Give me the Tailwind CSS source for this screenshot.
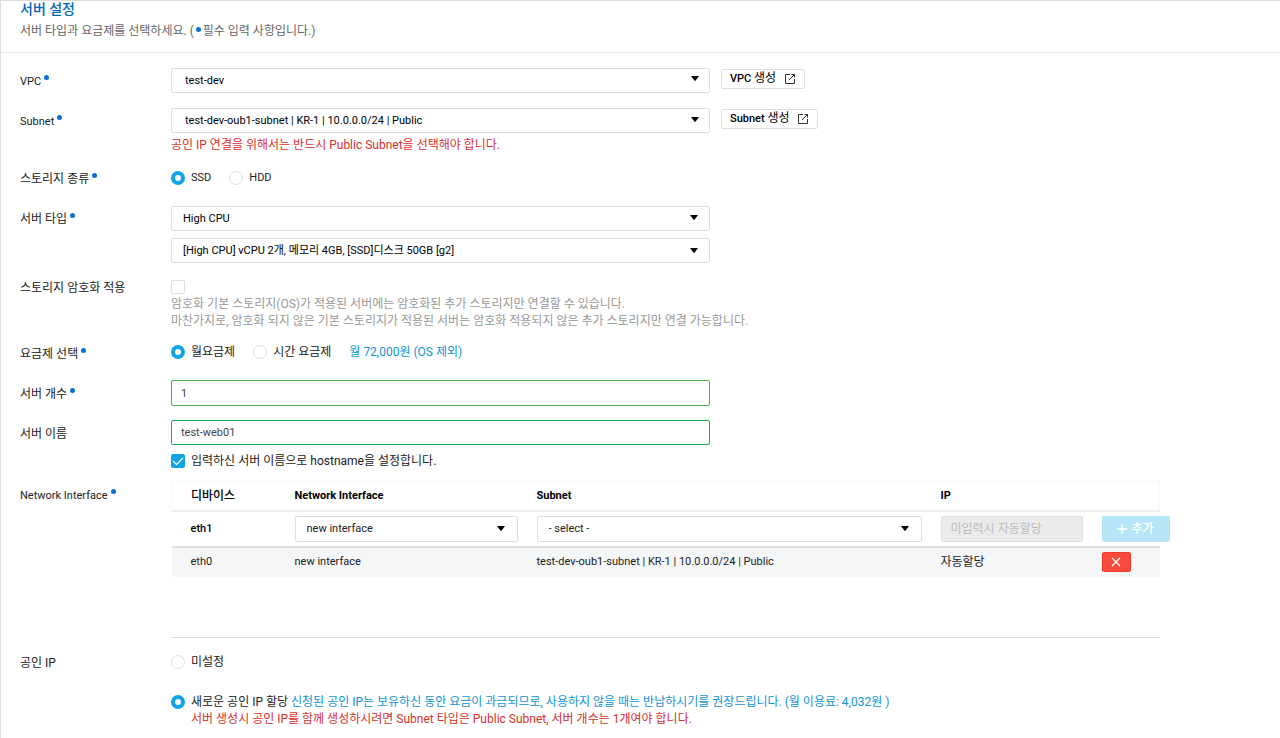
<!DOCTYPE html>
<html lang="ko">
  <head>
    <meta charset="UTF-8" />
    <meta name="viewport" content="width=device-width, initial-scale=1.0" />
    <title>서버 설정</title>
    <script src="https://cdn.jsdelivr.net/npm/@tailwindcss/browser@4"></script>
  </head>
  <body
    class="min-h-screen border-t border-l border-[#dedede] bg-white font-[Roboto,'Noto_Sans_CJK_KR',sans-serif] text-xs leading-[18px] text-[#222]"
  >
    <svg class="hidden" xmlns="http://www.w3.org/2000/svg">
      <symbol id="caret" viewBox="0 0 8 5">
        <path d="M0 0h8L4.6 4.6q-.6.6-1.2 0z" fill="#000" />
      </symbol>
      <symbol id="external" viewBox="0 0 12 12">
        <path
          d="M6 1.500H1.500v9h9V6M7.500 1.500h3v3M10.500 1.500L5 7"
          fill="none"
          stroke="#333"
          stroke-width="1"
        />
      </symbol>
    </svg>

    <header class="h-[52px] border-b border-[#e8e8e8] pl-[19px]">
      <h1 class="text-sm leading-4 font-medium text-[#0068b7]">서버 설정</h1>
      <p class="mt-[5px] flex items-center text-[#666]">
        서버 타입과 요금제를 선택하세요. (<span
          class="mr-0.5 mb-1 ml-0.5 size-[5px] rounded-full bg-[#0a6fd0]"
        ></span
        >필수 입력 사항입니다.)
      </p>
    </header>

    <form class="pt-[15px] pr-[120px] pb-2 pl-[19px]">
      <div class="mb-3.5 flex h-[26px]">
        <label for="vpc" class="flex h-[26px] w-[151px] shrink-0 text-[11px] leading-7"
          >VPC<span class="mt-[7px] ml-[3px] size-[5px] rounded-full bg-[#0a6fd0]"></span
        ></label>
        <div class="relative w-[539px]">
          <select
            id="vpc"
            class="block h-[25px] w-full appearance-none rounded-xs border border-[#dfdfdf] bg-white pl-[13px] text-[11px] text-black"
          >
            <option>test-dev</option>
          </select>
          <svg class="pointer-events-none absolute top-2 right-[11px] h-[5px] w-2"><use href="#caret" /></svg>
        </div>
        <button
          type="button"
          class="mt-px ml-[11px] flex h-5 items-center gap-2 rounded-xs border border-[#dfdfdf] px-2 text-[11px] font-medium text-black"
        >
          <span>VPC <span class="text-xs font-normal">생성</span></span>
          <svg class="size-3"><use href="#external" /></svg>
        </button>
      </div>

      <div class="mb-3.5 flex">
        <label for="subnet" class="flex h-[26px] w-[151px] shrink-0 text-[11px] leading-7"
          >Subnet<span class="mt-[7px] ml-[3px] size-[5px] rounded-full bg-[#0a6fd0]"></span
        ></label>
        <div class="w-[539px]">
          <div class="relative">
            <select
              id="subnet"
              class="block h-[25px] w-full appearance-none rounded-xs border border-[#dfdfdf] bg-white pl-[13px] text-[11px] text-black"
            >
              <option>test-dev-oub1-subnet | KR-1 | 10.0.0.0/24 | Public</option>
            </select>
            <svg class="pointer-events-none absolute top-[9px] right-[11px] h-[5px] w-2"><use href="#caret" /></svg>
          </div>
          <p class="mt-[3px] text-[#d9302c]">
            공인 IP 연결을 위해서는 반드시 Public Subnet을 선택해야 합니다.
          </p>
        </div>
        <button
          type="button"
          class="mt-px ml-[11px] flex h-5 items-center gap-2 self-start rounded-xs border border-[#dfdfdf] px-2 text-[11px] font-medium text-black"
        >
          <span>Subnet <span class="text-xs font-normal">생성</span></span>
          <svg class="size-3"><use href="#external" /></svg>
        </button>
      </div>

      <div class="mb-4.5 flex h-5 leading-5" role="radiogroup" aria-labelledby="storage-label">
        <span id="storage-label" class="flex w-[151px] shrink-0 leading-[22px]"
          >스토리지 종류<span class="mt-[5px] ml-[3px] size-[5px] rounded-full bg-[#0a6fd0]"></span
        ></span>
        <label class="mr-4.5 flex items-center gap-1.5 text-[11px]">
          <input
            type="radio"
            name="storage"
            checked
            class="size-3.5 appearance-none rounded-full border border-[#dfdfdf] checked:border-4 checked:border-[#12a5e5]"
          />
          SSD
        </label>
        <label class="flex items-center gap-1.5 text-[11px]">
          <input
            type="radio"
            name="storage"
            class="size-3.5 appearance-none rounded-full border border-[#dfdfdf] checked:border-4 checked:border-[#12a5e5]"
          />
          HDD
        </label>
      </div>

      <div class="mb-4 flex">
        <label for="server-type" class="flex h-[26px] w-[151px] shrink-0 leading-[26px]"
          >서버 타입<span class="mt-[7px] ml-[3px] size-[5px] rounded-full bg-[#0a6fd0]"></span
        ></label>
        <div class="w-[539px] space-y-[7px]">
          <div class="relative">
            <select
              id="server-type"
              class="block h-[25px] w-full appearance-none rounded-xs border border-[#dfdfdf] bg-white pl-[11px] text-[11px] text-black"
            >
              <option>High CPU</option>
            </select>
            <svg class="pointer-events-none absolute top-[9px] right-3 h-[5px] w-2"><use href="#caret" /></svg>
          </div>
          <div class="relative">
            <select
              aria-label="서버 사양"
              class="block h-[25px] w-full appearance-none rounded-xs border border-[#dfdfdf] bg-white pl-[11px] text-[11px] text-black"
            >
              <option>[High CPU] vCPU 2개, 메모리 4GB, [SSD]디스크 50GB [g2]</option>
            </select>
            <svg class="pointer-events-none absolute top-[10px] right-3 h-[5px] w-2"><use href="#caret" /></svg>
          </div>
        </div>
      </div>

      <div class="mb-3 flex">
        <label for="encrypt" class="w-[151px] shrink-0">스토리지 암호화 적용</label>
        <div>
          <input
            id="encrypt"
            type="checkbox"
            class="mt-px mb-0.5 block size-3.5 appearance-none rounded-xs border border-[#dfdfdf] checked:bg-[#12a5e5]"
          />
          <p class="leading-[17px] text-[#999]">
            암호화 기본 스토리지(OS)가 적용된 서버에는 암호화된 추가 스토리지만 연결할 수 있습니다.<br />
            마찬가지로, 암호화 되지 않은 기본 스토리지가 적용된 서버는 암호화 적용되지 않은 추가 스토리지만 연결 가능합니다.
          </p>
        </div>
      </div>

      <div class="mb-4.5 flex h-5 leading-5" role="radiogroup" aria-labelledby="plan-label">
        <span id="plan-label" class="flex w-[151px] shrink-0 leading-6"
          >요금제 선택<span class="mt-1.5 ml-[3px] size-[5px] rounded-full bg-[#0a6fd0]"></span
        ></span>
        <label class="mr-4.5 flex items-center gap-1.5">
          <input
            type="radio"
            name="plan"
            checked
            class="size-3.5 appearance-none rounded-full border border-[#dfdfdf] checked:border-4 checked:border-[#12a5e5]"
          />
          월요금제
        </label>
        <label class="mr-4.5 flex items-center gap-1.5">
          <input
            type="radio"
            name="plan"
            class="size-3.5 appearance-none rounded-full border border-[#dfdfdf] checked:border-4 checked:border-[#12a5e5]"
          />
          시간 요금제
        </label>
        <span class="text-[#0f95d8]">월 72,000원 (OS 제외)</span>
      </div>

      <div class="mb-3.5 flex h-[26px]">
        <label for="count" class="flex h-[26px] w-[151px] shrink-0 leading-7"
          >서버 개수<span class="mt-2 ml-[3px] size-[5px] rounded-full bg-[#0a6fd0]"></span
        ></label>
        <input
          id="count"
          type="text"
          value="1"
          class="h-[26px] w-[539px] rounded-xs border border-[#4caf50] px-[9px] text-[11px] text-[#444]"
        />
      </div>

      <div class="mb-2.5 flex">
        <label for="name" class="h-[26px] w-[151px] shrink-0 leading-7">서버 이름</label>
        <div class="w-[539px]">
          <input
            id="name"
            type="text"
            value="test-web01"
            class="block h-[25px] w-full rounded-xs border border-[#0fae4b] px-[9px] text-[11px] text-[#444]"
          />
          <label class="mt-1.5 flex items-center gap-1.5 leading-5">
            <span class="relative size-3.5">
              <input
                type="checkbox"
                checked
                class="block size-3.5 appearance-none rounded-xs border border-[#dfdfdf] checked:border-[#12a5e5] checked:bg-[#12a5e5]"
              />
              <svg class="pointer-events-none absolute inset-0 size-3.5" viewBox="0 0 14 14">
                <path d="M2 7l3.500 3.500L12 4" fill="none" stroke="#fff" stroke-width="1.2" />
              </svg>
            </span>
            입력하신 서버 이름으로 hostname을 설정합니다.
          </label>
        </div>
      </div>

      <div class="mb-3.5 flex">
        <span class="flex w-[151px] shrink-0 text-[11px] leading-[30px]"
          >Network Interface<span class="mt-2 ml-[3px] size-[5px] rounded-full bg-[#0a6fd0]"></span
        ></span>
        <div class="grow border-b border-[#dfdfdf] pb-[60px]">
          <table class="w-full table-fixed text-left text-[11px]">
            <thead class="border border-b-2 border-[#f8f8f8] border-b-[#eee] text-black">
              <tr class="h-[29px]">
                <th class="w-[123px] pl-[19px] text-xs font-medium">디바이스</th>
                <th class="w-[242px] font-bold">Network Interface</th>
                <th class="font-bold">Subnet</th>
                <th class="w-[161px] font-bold">IP</th>
                <th class="w-[58px]"></th>
              </tr>
            </thead>
            <tbody>
              <tr class="h-9 border-b-2 border-[#dfdfdf]">
                <td class="pl-[19px] font-medium text-black">eth1</td>
                <td class="pr-[19px]">
                  <div class="relative">
                    <select
                      aria-label="Network Interface"
                      class="block h-[26px] w-full appearance-none rounded-xs border border-[#dfdfdf] bg-white pl-[11px]"
                    >
                      <option>new interface</option>
                    </select>
                    <svg class="pointer-events-none absolute top-[10px] right-[13px] h-[5px] w-2"><use href="#caret" /></svg>
                  </div>
                </td>
                <td class="pr-[19px]">
                  <div class="relative">
                    <select
                      aria-label="Subnet"
                      class="block h-[26px] w-full appearance-none rounded-xs border border-[#dfdfdf] bg-white pl-[11px]"
                    >
                      <option>- select -</option>
                    </select>
                    <svg class="pointer-events-none absolute top-[10px] right-[13px] h-[5px] w-2"><use href="#caret" /></svg>
                  </div>
                </td>
                <td class="pr-[19px]">
                  <input
                    type="text"
                    aria-label="IP"
                    disabled
                    placeholder="미입력시 자동할당"
                    class="block h-[26px] w-full rounded-xs border border-[#dfdfdf] bg-[#ebebeb] px-[9px] text-xs placeholder:text-[#bbb]"
                  />
                </td>
                <td>
                  <button
                    type="button"
                    disabled
                    class="flex h-[26px] w-[68px] items-center justify-center gap-1 rounded-xs bg-[#b8e6f9] text-xs font-medium text-white"
                  >
                    <svg class="size-2.5" viewBox="0 0 10 10">
                      <path d="M5 0v10M0 5h10" stroke="#fff" stroke-width="1.4" />
                    </svg>
                    추가
                  </button>
                </td>
              </tr>
              <tr class="h-[30px] bg-[#f5f6f8]">
                <td class="pl-[19px]">eth0</td>
                <td>new interface</td>
                <td>test-dev-oub1-subnet | KR-1 | 10.0.0.0/24 | Public</td>
                <td class="text-xs">자동할당</td>
                <td>
                  <button
                    type="button"
                    aria-label="삭제"
                    class="flex h-5 w-[29px] items-center justify-center rounded-xs border border-[#ee3a2a] bg-[#fb4b3c]"
                  >
                    <svg class="size-2.5" viewBox="0 0 10 10">
                      <path d="M1 1l8 8M9 1L1 9" stroke="#fff" stroke-width="1.3" />
                    </svg>
                  </button>
                </td>
              </tr>
            </tbody>
          </table>
        </div>
      </div>

      <div class="flex leading-5" role="radiogroup" aria-labelledby="public-ip-label">
        <span id="public-ip-label" class="w-[151px] shrink-0 leading-[22px]">공인 IP</span>
        <div>
          <label class="mb-5 flex items-center gap-1.5">
            <input
              type="radio"
              name="public-ip"
              class="size-3.5 appearance-none rounded-full border border-[#dfdfdf] checked:border-4 checked:border-[#12a5e5]"
            />
            미설정
          </label>
          <label class="flex items-center gap-1.5">
            <input
              type="radio"
              name="public-ip"
              checked
              class="size-3.5 appearance-none rounded-full border border-[#dfdfdf] checked:border-4 checked:border-[#12a5e5]"
            />
            <span
              >새로운 공인 IP 할당
              <span class="text-[#0f95d8]"
                >신청된 공인 IP는 보유하신 동안 요금이 과금되므로, 사용하지 않을 때는 반납하시기를 권장드립니다. (월 이용료: 4,032원 )</span
              ></span
            >
          </label>
          <p class="pl-5 leading-[14px] text-[#d9302c]">
            서버 생성시 공인 IP를 함께 생성하시려면 Subnet 타입은 Public Subnet, 서버 개수는 1개여야 합니다.
          </p>
        </div>
      </div>
    </form>
  </body>
</html>
